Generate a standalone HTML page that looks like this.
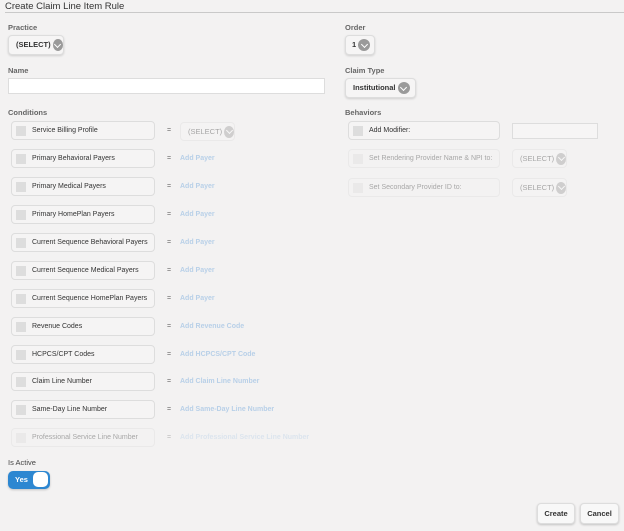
<!DOCTYPE html><html><head><style>
body{margin:0;width:624px;height:531px;background:#f3f2f2;font-family:"Liberation Sans",sans-serif;position:relative;overflow:hidden}
.a{position:absolute;white-space:nowrap}
.t{font-size:9.5px;color:#333;top:1px;left:5px}
.line{top:12px;left:5px;width:619px;height:1px;background:#c9c9c9}
.lb{font-size:7.5px;font-weight:bold;color:#666}
.sel{background:#f6f5f5;border:1px solid #ddd;border-radius:4px;box-shadow:0 1px 2px rgba(0,0,0,.15);font-size:7.5px;font-weight:bold;color:#333;display:flex;align-items:center;padding-left:7px;box-sizing:border-box;line-height:1}
.ch{width:12px;height:12px;border-radius:50%;background:#9a9a9a;margin-left:2px;display:inline-flex;align-items:center;justify-content:center}
.ch:after{content:"";width:4px;height:4px;border-right:1.5px solid #fff;border-bottom:1.5px solid #fff;transform:rotate(45deg);margin-top:-2px}
.box{background:#f5f4f4;border:1px solid #ddd;border-radius:4px;height:19px;box-sizing:border-box;font-size:7px;color:#333;display:flex;align-items:center;padding-left:4px;line-height:1}
.cb{width:10px;height:10px;background:#ddd;margin-right:6px}
.eq{font-size:7px;color:#666}
.lk{font-size:7px;font-weight:bold;color:#b8d0e8}
.dis{opacity:.4}
.btn{background:#f8f8f8;border:1px solid #ddd;border-radius:4px;box-shadow:0 1px 2px rgba(0,0,0,.2);font-size:7.5px;font-weight:bold;color:#333;display:flex;align-items:center;justify-content:center;box-sizing:border-box}
</style></head><body>
<div class="a t">Create Claim Line Item Rule</div><div class="a line"></div>
<div class="a lb" style="left:8px;top:23px">Practice</div>
<div class="a sel" style="left:8px;top:35px;width:56px;height:20px">(SELECT)<span class="ch"></span></div>
<div class="a lb" style="left:8px;top:66px">Name</div>
<div class="a" style="left:8px;top:78px;width:317px;height:16px;background:#fff;border:1px solid #ddd;box-sizing:border-box"></div>
<div class="a lb" style="left:8px;top:108px">Conditions</div>
<div class="a lb" style="left:345px;top:23px">Order</div>
<div class="a sel" style="left:345px;top:35px;width:30px;height:20px;padding-left:6px">1<span class="ch"></span></div>
<div class="a lb" style="left:345px;top:66px">Claim Type</div>
<div class="a sel" style="left:345px;top:78px;width:71px;height:20px">Institutional<span class="ch"></span></div>
<div class="a lb" style="left:345px;top:108px">Behaviors</div>

<div class="a box" style="left:11px;top:121px;width:144px"><span class="cb"></span>Service Billing Profile</div>
<div class="a eq" style="left:167px;top:127px">=</div>
<div class="a sel dis" style="left:180px;top:122px;width:55px;height:19px;font-weight:normal;box-shadow:none">(SELECT)<span class="ch"></span></div>

<div class="a box" style="left:11px;top:149px;width:144px"><span class="cb"></span>Primary Behavioral Payers</div><div class="a eq" style="left:167px;top:155px">=</div><div class="a lk" style="left:180px;top:155px">Add Payer</div>
<div class="a box" style="left:11px;top:177px;width:144px"><span class="cb"></span>Primary Medical Payers</div><div class="a eq" style="left:167px;top:183px">=</div><div class="a lk" style="left:180px;top:183px">Add Payer</div>
<div class="a box" style="left:11px;top:205px;width:144px"><span class="cb"></span>Primary HomePlan Payers</div><div class="a eq" style="left:167px;top:211px">=</div><div class="a lk" style="left:180px;top:211px">Add Payer</div>
<div class="a box" style="left:11px;top:233px;width:144px"><span class="cb"></span>Current Sequence Behavioral Payers</div><div class="a eq" style="left:167px;top:239px">=</div><div class="a lk" style="left:180px;top:239px">Add Payer</div>
<div class="a box" style="left:11px;top:261px;width:144px"><span class="cb"></span>Current Sequence Medical Payers</div><div class="a eq" style="left:167px;top:267px">=</div><div class="a lk" style="left:180px;top:267px">Add Payer</div>
<div class="a box" style="left:11px;top:289px;width:144px"><span class="cb"></span>Current Sequence HomePlan Payers</div><div class="a eq" style="left:167px;top:295px">=</div><div class="a lk" style="left:180px;top:295px">Add Payer</div>
<div class="a box" style="left:11px;top:317px;width:144px"><span class="cb"></span>Revenue Codes</div><div class="a eq" style="left:167px;top:323px">=</div><div class="a lk" style="left:180px;top:323px">Add Revenue Code</div>
<div class="a box" style="left:11px;top:345px;width:144px"><span class="cb"></span>HCPCS/CPT Codes</div><div class="a eq" style="left:167px;top:351px">=</div><div class="a lk" style="left:180px;top:351px">Add HCPCS/CPT Code</div>
<div class="a box" style="left:11px;top:372px;width:144px"><span class="cb"></span>Claim Line Number</div><div class="a eq" style="left:167px;top:378px">=</div><div class="a lk" style="left:180px;top:378px">Add Claim Line Number</div>
<div class="a box" style="left:11px;top:400px;width:144px"><span class="cb"></span>Same-Day Line Number</div><div class="a eq" style="left:167px;top:406px">=</div><div class="a lk" style="left:180px;top:406px">Add Same-Day Line Number</div>
<div class="a dis" style="left:0;top:0"><div class="a box" style="left:11px;top:428px;width:144px"><span class="cb"></span>Professional Service Line Number</div><div class="a eq" style="left:167px;top:434px">=</div><div class="a lk" style="left:180px;top:434px">Add Professional Service Line Number</div></div>

<div class="a box" style="left:348px;top:121px;width:152px"><span class="cb"></span>Add Modifier:</div>
<div class="a" style="left:512px;top:123px;width:86px;height:16px;background:#f6f5f5;border:1px solid #ddd;box-sizing:border-box"></div>
<div class="a dis" style="left:0;top:0">
<div class="a box" style="left:348px;top:149px;width:152px"><span class="cb"></span>Set Rendering Provider Name &amp; NPI to:</div>
<div class="a sel" style="left:512px;top:149px;width:55px;height:19px;font-weight:normal;box-shadow:none">(SELECT)<span class="ch"></span></div>
<div class="a box" style="left:348px;top:178px;width:152px"><span class="cb"></span>Set Secondary Provider ID to:</div>
<div class="a sel" style="left:512px;top:178px;width:55px;height:19px;font-weight:normal;box-shadow:none">(SELECT)<span class="ch"></span></div>
</div>

<div class="a lb" style="left:8px;top:458px;color:#444;font-weight:normal">Is Active</div>
<div class="a" style="left:8px;top:471px;width:42px;height:18px;background:#2d87d1;border-radius:5px;box-shadow:0 1px 2px rgba(0,0,0,.2)">
<span class="a" style="left:7px;top:4px;font-size:7.5px;font-weight:bold;color:#fff">Yes</span>
<span class="a" style="left:25px;top:1px;width:15px;height:15px;background:#fff;border-radius:5px"></span></div>
<div class="a btn" style="left:537px;top:503px;width:38px;height:21px">Create</div>
<div class="a btn" style="left:580px;top:503px;width:39px;height:21px">Cancel</div>
</body></html>
